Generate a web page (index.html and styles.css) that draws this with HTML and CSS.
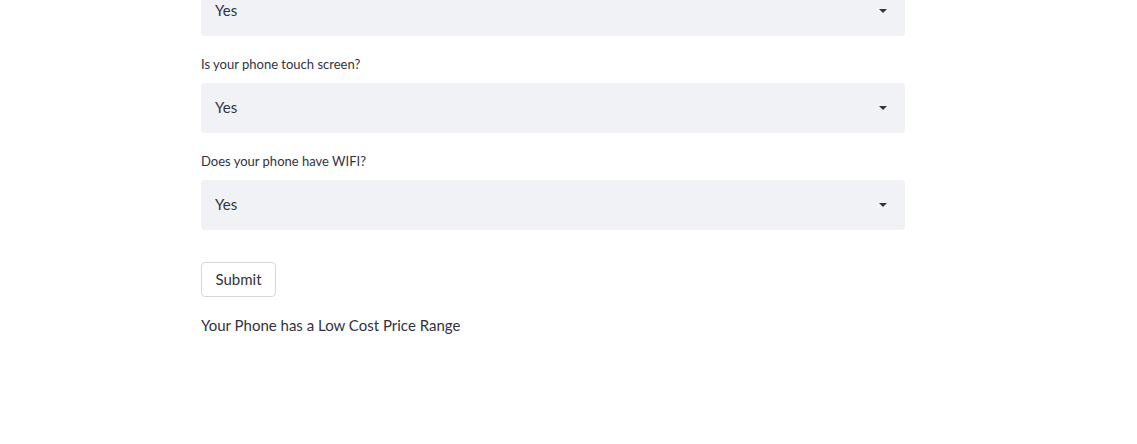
FILE: index.html
```html
<!DOCTYPE html>
<html>
<head>
<meta charset="utf-8">
<link rel="stylesheet" href="styles.css">
</head>
<body>
<main class="page">
  <div class="block">
    <div class="select"><span>Yes</span><svg class="caret" width="10" height="6" viewBox="0 0 10 6"><path d="M1 1h8L5 5z" fill="#31333f"/></svg></div>
  </div>
  <div class="block">
    <label class="label">Is your phone touch screen?</label>
    <div class="select"><span>Yes</span><svg class="caret" width="10" height="6" viewBox="0 0 10 6"><path d="M1 1h8L5 5z" fill="#31333f"/></svg></div>
  </div>
  <div class="block">
    <label class="label">Does your phone have WIFI?</label>
    <div class="select"><span>Yes</span><svg class="caret" width="10" height="6" viewBox="0 0 10 6"><path d="M1 1h8L5 5z" fill="#31333f"/></svg></div>
  </div>
  <button class="btn">Submit</button>
  <p class="result">Your Phone has a Low Cost Price Range</p>
</main>
</body>
</html>
```
FILE: styles.css
```css
html, body {
  margin: 0;
  padding: 0;
  background: #ffffff;
}
body {
  font-family: Lato, "Noto Sans", sans-serif;
  color: #31333f;
  overflow: hidden;
}
.page {
  width: 704px;
  margin: -14px 0 0 201px;
  display: flex;
  flex-direction: column;
  align-items: flex-start;
}
.block {
  width: 100%;
  display: flex;
  flex-direction: column;
  margin-bottom: 19px;
}
.label {
  font-size: 13px;
  line-height: 18px;
  margin-bottom: 10px;
  color: #31333f;
}
.select {
  height: 50px;
  background: #f0f2f6;
  border-radius: 4px;
  display: flex;
  align-items: center;
  justify-content: space-between;
  padding: 0 17px 0 14px;
  font-size: 15px;
  box-sizing: border-box;
}
.select span {
  position: relative;
  top: -1px;
}
.caret {
  display: block;
}
.btn {
  margin-top: 13px;
  height: 35px;
  width: 75px;
  border: 1px solid #d6d6d9;
  border-radius: 4px;
  background: #ffffff;
  color: #31333f;
  font-family: inherit;
  font-size: 15px;
  padding: 0 0 1px;
}
.result {
  margin: 16px 0 0;
  font-size: 15px;
  line-height: 24px;
}
```
